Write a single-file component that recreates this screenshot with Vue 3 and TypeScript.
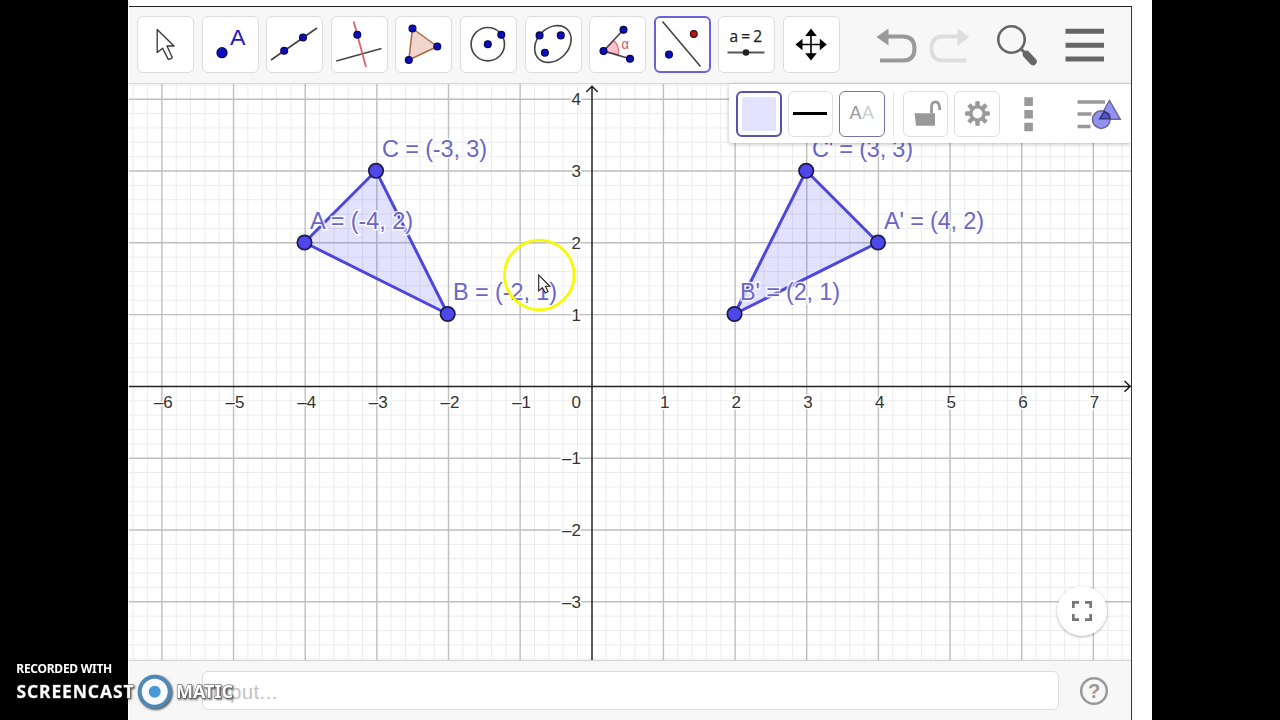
<script setup lang="ts">
interface Tick { n: number; label: string; pos: number }
interface PointMark { name: string; x: number; y: number; lx: number; ly: number; w: number }

const originX = 591.8
const originY = 386.4
const unit = 71.65
const px = (x: number): number => originX + x * unit
const py = (y: number): number => originY - y * 71.8
const fmt = (n: number): string => (n < 0 ? '–' + -n : String(n))
const range = (a: number, b: number): number[] => Array.from({ length: b - a + 1 }, (_, i) => a + i)

const xTicks: Tick[] = range(-6, 7).filter(n => n !== 0).map(n => ({ n, label: fmt(n), pos: px(n) }))
const yTicks: Tick[] = range(-3, 4).filter(n => n !== 0).map(n => ({ n, label: fmt(n), pos: py(n) }))
const minorX: number[] = range(-32, 37).filter(n => n % 5 !== 0).map(n => px(n / 5))
const minorY: number[] = range(-19, 21).filter(n => n % 5 !== 0).map(n => py(n / 5))

const points: PointMark[] = [
  { name: 'A = (-4, 2)', x: 304.5, y: 242.5, lx: 310, ly: 228.5, w: 103 },
  { name: 'B = (-2, 1)', x: 447.7, y: 314, lx: 453, ly: 300.2, w: 104 },
  { name: 'C = (-3, 3)', x: 376, y: 170.8, lx: 382, ly: 157, w: 105 },
  { name: "A' = (4, 2)", x: 878, y: 242.5, lx: 884, ly: 228.5, w: 100 },
  { name: "B' = (2, 1)", x: 734.5, y: 314, lx: 740, ly: 300.2, w: 100 },
  { name: "C' = (3, 3)", x: 806.2, y: 170.8, lx: 812, ly: 157, w: 101 },
]
const triangles: string[] = [
  '304.5,242.5 447.7,314 376,170.8',
  '878,242.5 734.5,314 806.2,170.8',
]
const tools = ['move', 'point', 'line', 'perpendicular', 'polygon', 'circle', 'ellipse', 'angle', 'reflect', 'slider', 'pan']
</script>

<template>
  <div class="screen">
    <div class="page">
      <div class="frame">
        <header class="toolbar">
          <div class="tools">
            <button v-for="t in tools" :key="t" class="tool" :class="{ active: t === 'reflect' }">
              <svg viewBox="0 0 56 56" width="56" height="56">
                <path v-if="t === 'move'" d="M20.2 13.5V36.6L25.6 32.2L31.3 43.4Q34 43.5 35.3 41.4L30 30H37Z" fill="#fff" stroke="#333" stroke-width="1.3" stroke-linejoin="round" />
                <g v-else-if="t === 'point'">
                  <circle cx="20" cy="36.7" r="5" class="dot" />
                  <text x="28" y="28.8" class="glyph-a" textLength="15.5" lengthAdjust="spacingAndGlyphs">A</text>
                </g>
                <g v-else-if="t === 'line'">
                  <path d="M5 44L51 12" class="ink" />
                  <circle cx="18.2" cy="34.8" r="3.4" class="dot" /><circle cx="37" cy="21.5" r="3.4" class="dot" />
                </g>
                <g v-else-if="t === 'perpendicular'">
                  <path d="M5.3 45L50.5 32.6" class="ink" />
                  <path d="M22.7 5.5L35 51" stroke="#e0606c" stroke-width="1.8" />
                  <circle cx="26.3" cy="18.7" r="3.4" class="dot" />
                </g>
                <g v-else-if="t === 'polygon'">
                  <path d="M17.5 12.5L42.3 30.5L13.8 44Z" fill="#f0d6cd" stroke="#a56b45" stroke-width="1.5" />
                  <circle cx="17.5" cy="12.5" r="3.4" class="dot" /><circle cx="42.3" cy="30.5" r="3.4" class="dot" /><circle cx="13.8" cy="44" r="3.4" class="dot" />
                </g>
                <g v-else-if="t === 'circle'">
                  <circle cx="27.8" cy="28.2" r="16.7" class="ink" />
                  <circle cx="27.8" cy="28.2" r="3.4" class="dot" /><circle cx="41.3" cy="18.8" r="3.4" class="dot" />
                </g>
                <g v-else-if="t === 'ellipse'">
                  <ellipse cx="27.9" cy="28" rx="20.5" ry="15.8" transform="rotate(-46 27.9 28)" class="ink" />
                  <circle cx="14.6" cy="19.4" r="3.4" class="dot" /><circle cx="35.8" cy="19.4" r="3.4" class="dot" /><circle cx="19.9" cy="36.7" r="3.4" class="dot" />
                </g>
                <g v-else-if="t === 'angle'">
                  <path d="M14.5 35L24.8 24.5Q30.5 30 29.7 38.5Z" fill="#ffc2ca" stroke="#e06a7a" stroke-width="1.2" />
                  <path d="M34.5 13.8L14.5 35L41 42.8" class="ink" />
                  <circle cx="14.5" cy="35" r="3.4" class="dot" /><circle cx="34.5" cy="13.8" r="3.4" class="dot" /><circle cx="41" cy="42.8" r="3.4" class="dot" />
                  <text x="32.5" y="32.5" class="alpha" textLength="7.5" lengthAdjust="spacingAndGlyphs">α</text>
                </g>
                <g v-else-if="t === 'reflect'">
                  <path d="M8.5 5.5L46.5 50.5" class="ink" />
                  <circle cx="15" cy="38.6" r="3.4" class="dot" /><circle cx="39.8" cy="18" r="3.4" fill="#b3141c" stroke="#3d1012" stroke-width="1.2" />
                </g>
                <g v-else-if="t === 'slider'">
                  <text x="11.6" y="26" class="slider-text" textLength="32.5">a=2</text>
                  <path d="M9.5 36.5H46.5" stroke="#555" stroke-width="1.8" />
                  <circle cx="28" cy="36.5" r="3.3" fill="#222" />
                </g>
                <g v-else>
                  <path d="M28 18V39M18 28.5H39" stroke="#000" stroke-width="1.6" />
                  <path d="M28 12.5L33.8 20H22.2ZM28 44.5L33.8 37.3H22.2ZM12.5 28.5L19.5 22.8V34.2ZM43.8 28.5L36.8 22.8V34.2Z" fill="#000" />
                </g>
              </svg>
            </button>
          </div>
          <svg class="actions" viewBox="870 18 240 54" width="240" height="54">
            <g fill="none" stroke-width="4">
              <path d="M886 37.5H903Q914.5 37.5 914.5 49.5Q914.5 61.5 903 61.5H880" stroke="#999" />
              <path d="M960 37.5H943Q931.5 37.5 931.5 49.5Q931.5 61.5 943 61.5H966.5" stroke="#dedede" />
            </g>
            <path d="M876.5 38L888.5 29.5V46.5Z" fill="#999" />
            <path d="M969.5 38L957.5 29.5V46.5Z" fill="#dedede" />
            <circle cx="1011.5" cy="40.5" r="13.2" fill="none" stroke="#666" stroke-width="2.6" />
            <path d="M1020.5 49.5L1026 55" stroke="#666" stroke-width="3" />
            <path d="M1026.5 55.5L1033 62.5" stroke="#666" stroke-width="7.5" stroke-linecap="round" />
            <path d="M1065.5 32.3H1104M1065.5 46.3H1104M1065.5 60H1104" stroke="#666" stroke-width="5" />
          </svg>
        </header>

        <main class="graph">
          <svg class="plot" viewBox="129 84 1002 576" width="1002" height="576">
            <g class="minor">
              <path v-for="x in minorX" :key="'x' + x" :d="`M${x} 84V660`" />
              <path v-for="y in minorY" :key="'y' + y" :d="`M129 ${y}H1131`" />
            </g>
            <g class="major">
              <path v-for="t in xTicks" :key="'x' + t.n" :d="`M${t.pos} 84V660`" />
              <path v-for="t in yTicks" :key="'y' + t.n" :d="`M129 ${t.pos}H1131`" />
            </g>
            <g class="axis">
              <path d="M129 386.4H1130M1124.5 381L1130.2 386.4L1124.5 391.8" />
              <path d="M592 660V87M586.3 92L592 86.3L597.7 92" />
            </g>
            <g class="ticks">
              <text v-for="t in xTicks" :key="t.n" :x="t.n < 0 ? t.pos - 8 : t.pos - 3.5" y="408.2">{{ t.label }}</text>
              <text x="571.5" y="408.2">0</text>
              <text v-for="t in yTicks" :key="'v' + t.n" x="581" :y="t.pos + 6" text-anchor="end">{{ t.label }}</text>
            </g>
            <polygon v-for="t in triangles" :key="t" :points="t" class="tri" />
            <g v-for="p in points" :key="p.name">
              <text :x="p.lx" :y="p.ly" :textLength="p.w" class="plabel">{{ p.name }}</text>
              <circle :cx="p.x" :cy="p.y" r="7.2" class="pt" />
            </g>
            <circle cx="539.3" cy="275" r="34.8" fill="none" stroke="#f8fa00" stroke-width="2.8" />
            <path d="M538.7 275V291L542.4 287.7L545.3 293L548 291.6L545.4 286.3H550Z" fill="#fff" stroke="#222" stroke-width="1.1" />
          </svg>

          <div class="stylebar">
            <button class="opt picked"><span class="swatch"></span></button>
            <button class="opt"><span class="stroke"></span></button>
            <button class="opt picked soft"><span class="aa">A<i>A</i></span></button>
            <span class="rule"></span>
            <button class="opt">
              <svg viewBox="903 91 45 45" width="45" height="45">
                <path d="M914.5 113.3H935V125.8H916Z" fill="#999" />
                <path d="M931.5 113V107Q931.5 101.8 935.5 101.8Q939.8 101.8 939.8 110" fill="none" stroke="#999" stroke-width="2.8" />
              </svg>
            </button>
            <button class="opt">
              <svg viewBox="-22.5 -22.5 45 45" width="45" height="45">
                <circle r="6.6" fill="none" stroke="#999" stroke-width="3.4" />
                <path v-for="k in 8" :key="k" d="M-1.7 -7.2V-11.8H1.7V-7.2Z" :transform="`rotate(${k * 45})`" fill="#999" stroke="#999" />
              </svg>
            </button>
            <svg class="views" viewBox="1018 90 106 46" width="106" height="46">
              <path d="M1024.3 96.3h8.6v8.6h-8.6zM1024.3 109h8.6v8.6h-8.6zM1024.3 121.7h8.6v8.6h-8.6z" fill="#999" />
              <path d="M1077.5 101H1105M1077.5 113H1091.5M1077.5 125.5H1090.5" stroke="#999" stroke-width="3.4" />
              <path d="M1109.5 99.5L1120.3 118.3H1099Z" fill="#9191f2" stroke="#666699" stroke-width="1.4" />
              <circle cx="1101.3" cy="118.6" r="8.8" fill="#9191f2" stroke="#666680" stroke-width="1.5" />
              <path d="M1104.2 110.5L1109 113.3L1110 117.8H1099.8Z" fill="#5452cf" stroke="#333377" stroke-width="1.5" />
            </svg>
          </div>

          <button class="fullscreen">
            <svg viewBox="0 0 20 20" width="20" height="20">
              <path d="M1.3 7V1.3H7M13 1.3H18.7V7M18.7 13V18.7H13M7 18.7H1.3V13" fill="none" stroke="#777" stroke-width="2.8" />
            </svg>
          </button>
        </main>

        <footer class="inputbar">
          <div class="field">Input...</div>
          <svg class="help" viewBox="0 0 30 30" width="30" height="30">
            <circle cx="15" cy="15" r="12.8" fill="none" stroke="#999" stroke-width="2.5" />
            <text x="15" y="22.2" text-anchor="middle">?</text>
          </svg>
        </footer>
      </div>
    </div>

    <svg class="watermark" viewBox="0 650 260 70" width="260" height="70">
      <text x="16.3" y="672.6" class="wm-small" textLength="96">RECORDED WITH</text>
      <text x="16.5" y="698" class="wm-big" textLength="117">SCREENCAST</text>
      <text x="176" y="698" class="wm-big" textLength="57" lengthAdjust="spacingAndGlyphs">MATIC</text>
      <g class="wm-logo">
        <circle cx="154.7" cy="691.7" r="15" fill="#f8fafc" stroke="#5088b5" stroke-width="4" />
        <circle cx="154.7" cy="691.7" r="6" fill="#4798d6" />
      </g>
    </svg>
  </div>
</template>

<style>
body { background: #000; overflow: hidden; }
</style>

<style scoped>
.screen { position: relative; width: 1280px; height: 720px; background: #000; overflow: hidden; font-family: "Liberation Sans", Arial, sans-serif; }
.page { box-sizing: border-box; width: 1024px; height: 720px; margin: 0 auto; padding: 6px 20px 0 1px; background: #fff; }
.frame { box-sizing: border-box; width: 1003px; height: 714px; border-top: 1px solid #222; border-right: 1px solid #333; display: flex; flex-direction: column; overflow: hidden; }
button { padding: 0; margin: 0; display: flex; align-items: center; justify-content: center; }
.toolbar { box-sizing: border-box; height: 77px; flex: none; background: #f7f7f7; border-bottom: 1px solid #d8d8d8; display: flex; align-items: center; padding: 0 21px 2px 8px; justify-content: space-between; }
.tools { display: flex; gap: 7.6px; }
.tool { box-sizing: border-box; width: 57px; height: 57px; background: #fff; border: 1px solid #dcdcdc; border-radius: 6px; }
.tool svg { flex: none; margin-left: -1px; }
.tool.active { border: 2.5px solid #6a62dc; }
.actions { flex: none; }
.dot { fill: #0c0cc4; stroke: #0a0a50; stroke-width: 1.3; }
.ink { fill: none; stroke: #444; stroke-width: 1.6; }
.glyph-a { font-size: 22px; fill: #2318c2; }
.alpha { font-size: 15px; fill: #e0505e; }
.slider-text { font-family: "Open Sans", sans-serif; font-size: 15.5px; fill: #222; stroke: #222; stroke-width: .25; }
.graph { position: relative; height: 576px; flex: none; background: #fff; }
.plot { display: block; }
.minor path { stroke: #ececec; stroke-width: 1; }
.major path { stroke: #bebebe; stroke-width: 1.4; }
.axis path { fill: none; stroke: #222; stroke-width: 1.5; }
.ticks text { font-size: 17px; fill: #333; stroke: #fff; stroke-width: 3; paint-order: stroke; }
.tri { fill: rgba(77, 77, 255, .16); stroke: #4d47dc; stroke-width: 3; stroke-linejoin: round; }
.plabel { font-size: 23.5px; fill: #6c66c8; stroke: rgba(255, 255, 255, .85); stroke-width: 3; paint-order: stroke; }
.pt { fill: #4d47ec; stroke: #1b1b44; stroke-width: 1.7; }
.stylebar { position: absolute; box-sizing: border-box; top: 0; right: 0; width: 402px; height: 59px; background: #fff; border-radius: 2px; box-shadow: 0 1px 4px rgba(0, 0, 0, .28); display: flex; align-items: center; padding: 0 7px; gap: 6px; }
.opt { box-sizing: border-box; width: 45.6px; height: 46px; border: 1px solid #dfdfdf; border-radius: 6px; background: #fff; flex: none; }
.opt svg { flex: none; }
.opt.picked { border: 2px solid #5751b4; }
.opt.picked.soft { border: 1.8px solid #7773a8; }
.swatch { width: 34px; height: 34px; border-radius: 2px; background: #e4e3ff; }
.stroke { width: 34px; height: 3px; background: #000; }
.aa { font-size: 18px; color: #999; letter-spacing: .5px; }
.aa i { font-style: normal; color: #ccc; }
.rule { width: 1px; height: 46px; margin: 0 3px 0 2px; background: #e6e6e6; }
.views { margin-left: 12px; flex: none; }
.fullscreen { position: absolute; right: 24px; bottom: 24px; width: 50px; height: 50px; border: 0; border-radius: 50%; background: #fff; box-shadow: 0 1px 3px rgba(0, 0, 0, .3); }
.inputbar { flex: 1; background: #f7f7f7; border-top: 1px solid #d5d5d5; display: flex; align-items: flex-start; padding: 10px 22px 0 73px; justify-content: space-between; }
.field { box-sizing: border-box; width: 857px; height: 39px; border: 1px solid #dcdcdc; border-radius: 6px; background: #fff; padding-left: 9px; font-size: 20.5px; line-height: 40px; letter-spacing: .4px; color: #c4c4c4; }
.help { margin-top: 5px; }
.help text { font-size: 20px; font-weight: bold; fill: #999; }
.watermark { position: absolute; left: 0; bottom: 0; font-family: "Noto Sans", sans-serif; font-weight: bold; filter: drop-shadow(1px 1px 1px rgba(0, 0, 0, .75)); }
.wm-small { font-size: 12px; fill: #fff; }
.wm-big { font-size: 17.5px; fill: #fff; stroke: #555; stroke-width: .8; paint-order: stroke; }
</style>
